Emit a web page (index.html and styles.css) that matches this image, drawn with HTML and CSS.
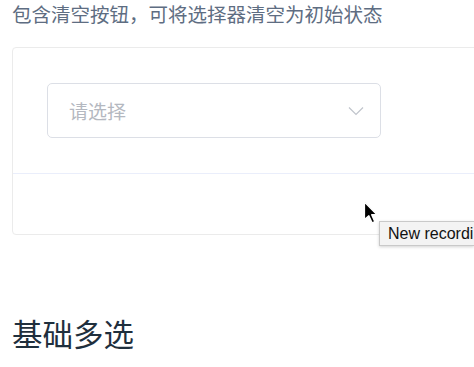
FILE: index.html
```html
<!DOCTYPE html>
<html lang="zh">
<head>
<meta charset="utf-8">
<link rel="stylesheet" href="styles.css">
</head>
<body>
<p class="desc">包含清空按钮，可将选择器清空为初始状态</p>
<div class="card">
  <div class="demo">
    <div class="select">
      <span class="placeholder">请选择</span>
      <svg class="arrow" width="16" height="10" viewBox="0 0 16 10"><path d="M1 1.5 L8 8.5 L15 1.5" fill="none" stroke="#c0c4cc" stroke-width="1.2"/></svg>
    </div>
  </div>
  <div class="meta"></div>
</div>
<h3 class="title">基础多选</h3>
<svg class="cursor" width="16" height="24" viewBox="0 0 14 22"><path d="M1 1 L1 17 L5 13.5 L8 20 L10.5 19 L7.6 12.6 L12.5 12.6 Z" fill="#000" stroke="#fff" stroke-width="1.2" stroke-linejoin="round"/></svg>
<div class="tooltip">New recordi</div>
</body>
</html>
```
FILE: styles.css
```css
html, body {
  margin: 0;
  padding: 0;
  overflow: hidden;
  background: #fff;
}
body {
  width: 474px;
  height: 367px;
  position: relative;
  padding-left: 12px;
  box-sizing: border-box;
  font-family: "Noto Sans CJK SC", "Noto Sans", sans-serif;
}
.desc {
  margin: 0;
  font-size: 19.5px;
  line-height: 28px;
  color: #5e6d82;
  white-space: nowrap;
}
.card {
  margin-top: 19px;
  width: 520px;
  border: 1px solid #ebebeb;
  border-radius: 4px;
}
.demo {
  padding: 35px 34px;
}
.select {
  width: 334px;
  height: 55px;
  box-sizing: border-box;
  border: 1px solid #dcdfe6;
  border-radius: 5px;
  display: flex;
  align-items: center;
  justify-content: space-between;
  padding: 0 16px 0 21px;
}
.placeholder {
  font-size: 19px;
  color: #b4b8c0;
}
.arrow {
  display: block;
}
.meta {
  border-top: 1px solid #eaeefb;
  height: 60px;
}
.title {
  margin: 77px 0 0;
  font-size: 30.5px;
  line-height: 42px;
  font-weight: 400;
  color: #1f2f3d;
}
.cursor {
  position: absolute;
  left: 363px;
  top: 201px;
}
.tooltip {
  position: absolute;
  left: 379px;
  top: 221px;
  width: 95px;
  height: 25px;
  box-sizing: border-box;
  padding: 0 0 0 8px;
  background: #f3f3f3;
  border: 1px solid #c9c9c9;
  border-right: 0;
  box-shadow: 0 1px 3px rgba(0,0,0,0.18);
  font-family: "Liberation Sans", Arial, sans-serif;
  font-size: 16px;
  line-height: 23px;
  color: #111;
  white-space: nowrap;
  overflow: hidden;
}
```
